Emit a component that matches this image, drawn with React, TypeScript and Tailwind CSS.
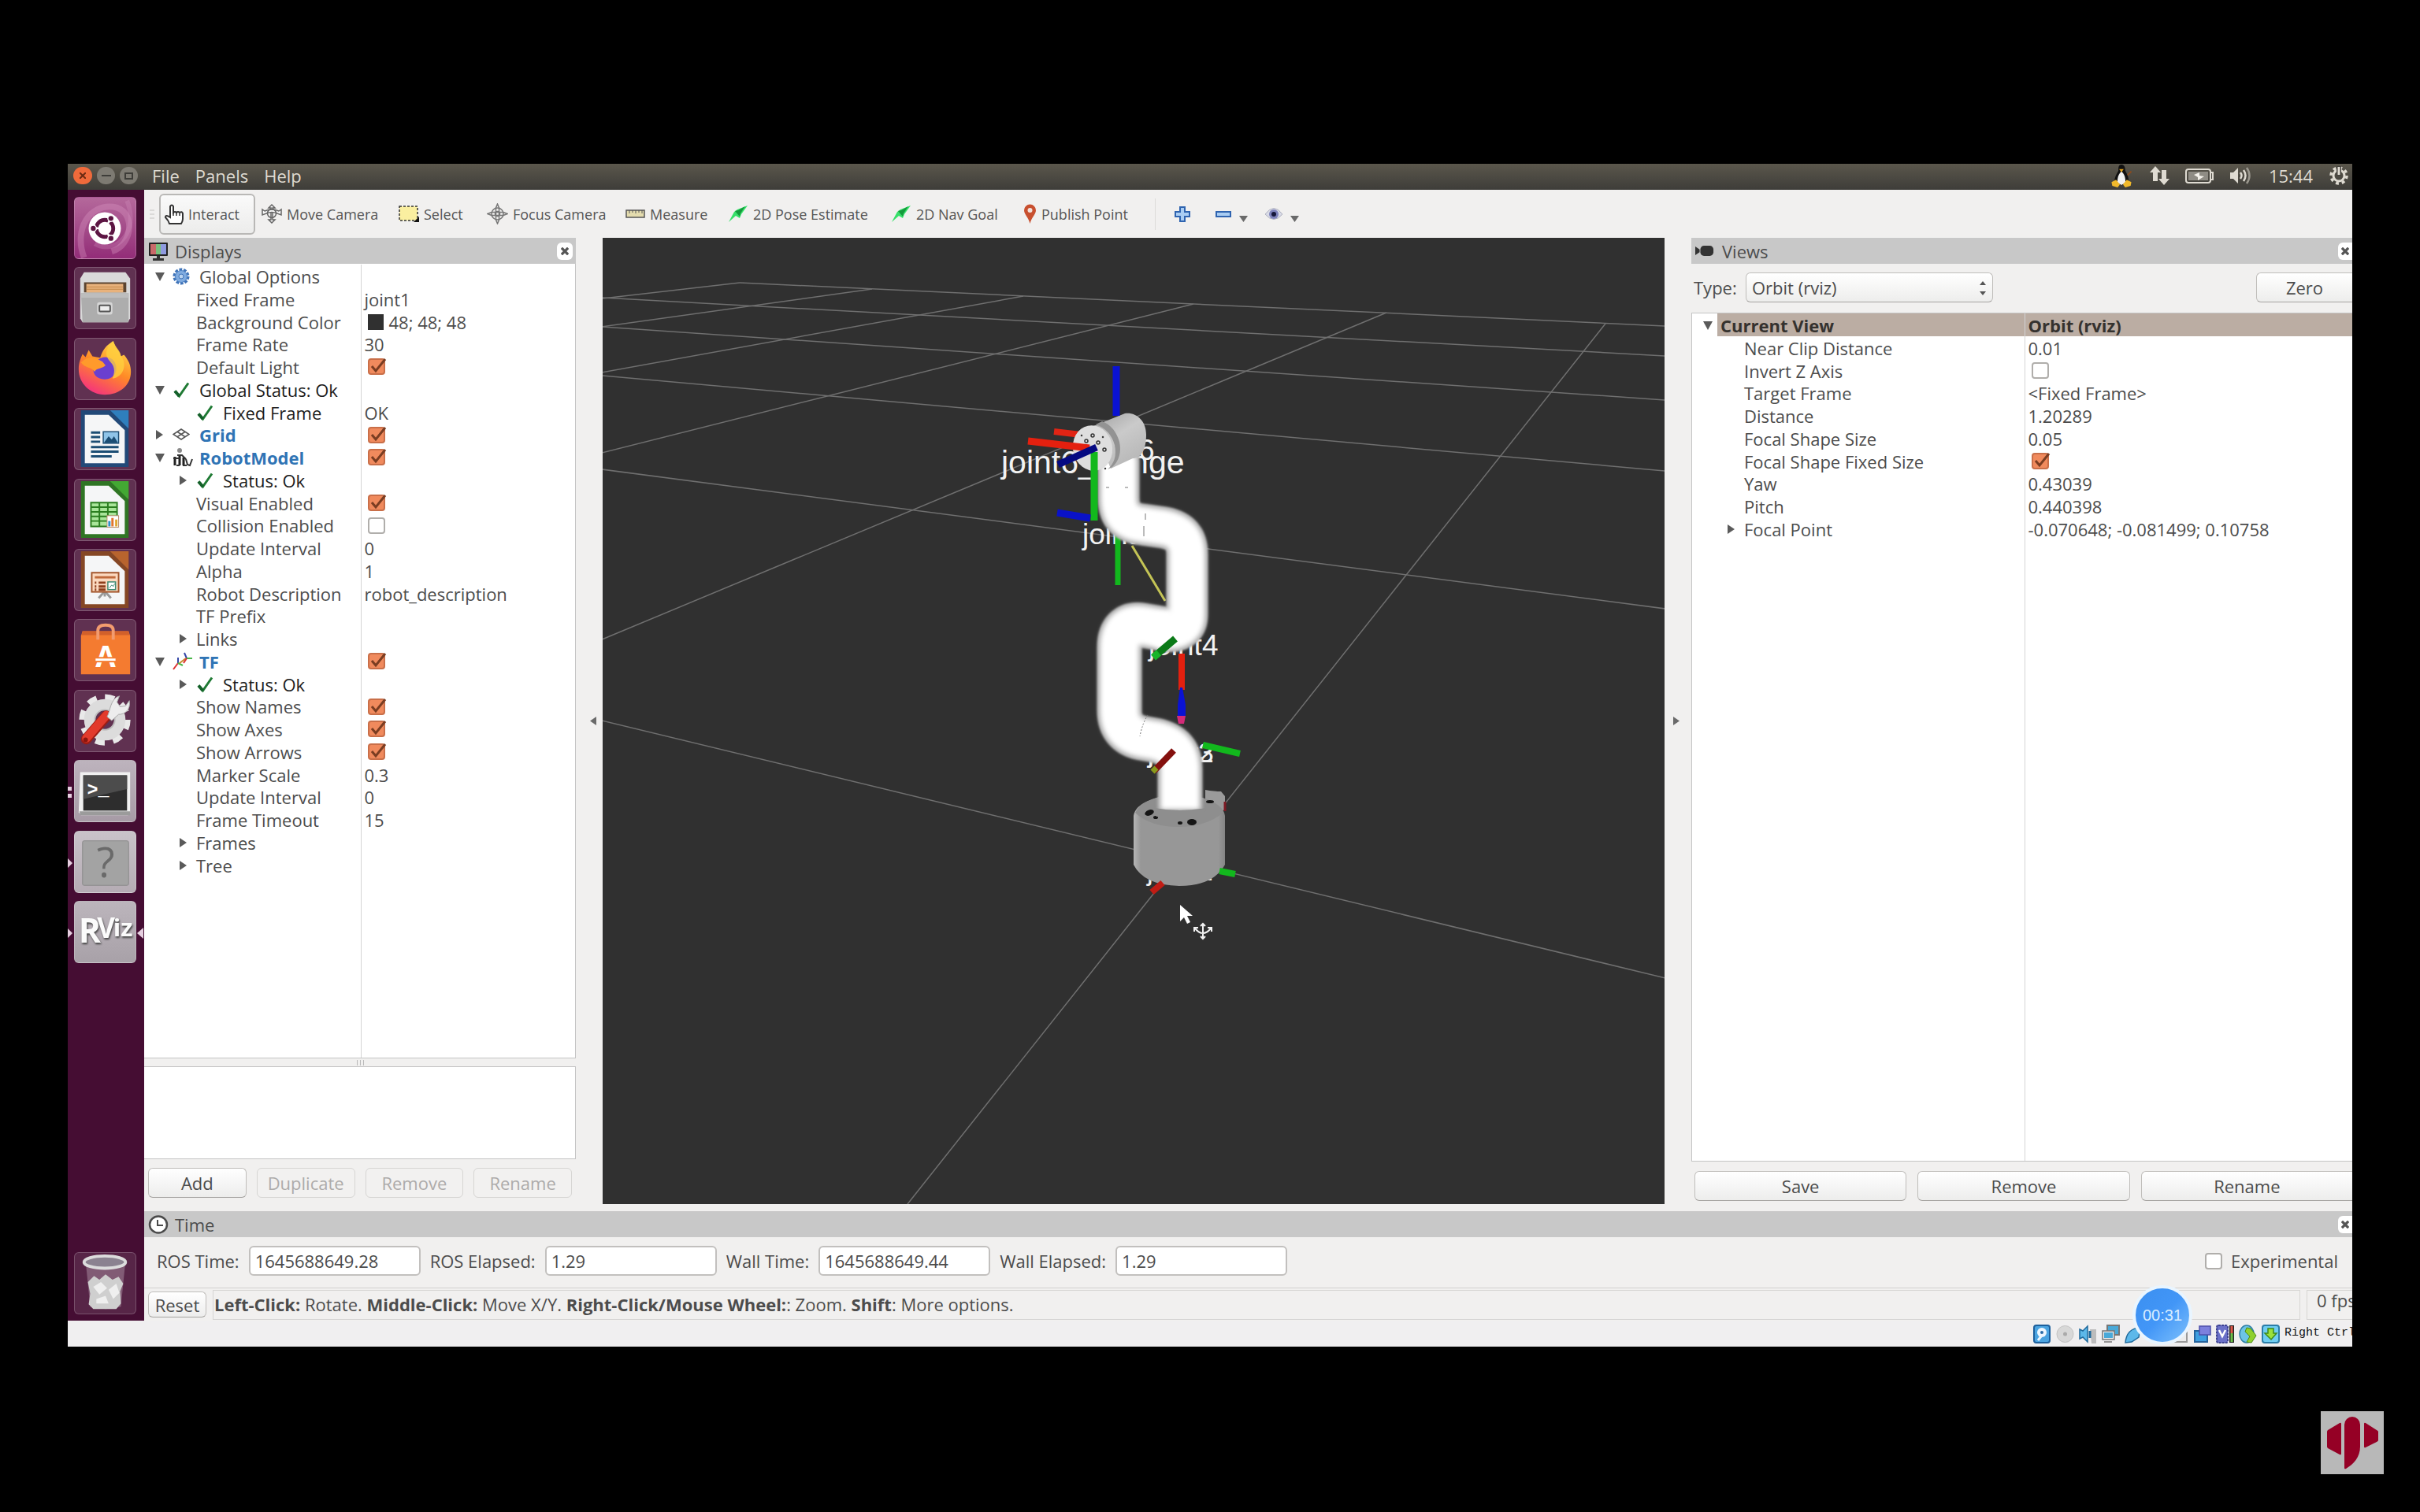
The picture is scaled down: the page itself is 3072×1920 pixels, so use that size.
import React from 'react';
import clsx from 'clsx';

interface TreeRow {
    label: string;
    depth: number;
    value?: React.ReactNode;
    checked?: boolean;
    open?: boolean;
    icon?: React.ReactNode;
    tone?: 'status' | 'display' | 'selected';
}

const CheckIcon = () => (
    <svg className="h-[22px] w-[22px]" viewBox="0 0 22 22" fill="none">
        <path d="M3 12.500 8.500 19 20 2.500" stroke="#1f7a34" strokeWidth="3" />
        <path d="M3 12.500 8.500 19" stroke="#14602a" strokeWidth="4" />
    </svg>
);

const GearIcon = () => (
    <svg className="h-[22px] w-[22px]" viewBox="0 0 22 22" fill="none">
        <circle cx="11" cy="11" r="8.500" stroke="#3f73b8" strokeWidth="4" strokeDasharray="3.600 1.740" />
        <circle cx="11" cy="11" r="7.500" fill="#7fabdf" stroke="#4f83c6" />
        <circle cx="11" cy="11" r="3" fill="#b9d3f0" stroke="#3f73b8" />
    </svg>
);

const GridIcon = () => (
    <svg className="h-[22px] w-[22px]" viewBox="0 0 22 22" fill="none" stroke="#555" strokeWidth="1.500">
        <path d="M11 4 21 10.500 11 17 1 10.500zM6 7.250 16 13.750M16 7.250 6 13.750" />
    </svg>
);

const RobotIcon = () => (
    <svg className="h-[24px] w-[26px]" viewBox="0 0 26 24" fill="none">
        <circle cx="9" cy="3" r="3" fill="#8a8a8a" />
        <path d="M3 11v11M9 9v13M14 12v10" stroke="#222" strokeWidth="3" />
        <path d="M6 9h6l5 5M1 13h8M5 22h4M13 22h5M17 14l2 7 3 1 3-8" stroke="#333" strokeWidth="2" />
    </svg>
);

const TfIcon = () => (
    <svg className="h-[24px] w-[26px]" viewBox="0 0 26 24" fill="none" strokeWidth="2">
        <path d="m1 22 6-8" stroke="#d33" />
        <path d="M7 14V7M18 8l-3-7" stroke="#3547a8" />
        <path d="m7 14 6 3M18 8h7" stroke="#49b649" />
        <path d="m9 14 8-6" stroke="#c98a2f" />
        <path d="m14 14 4-6" stroke="#d33" />
    </svg>
);

const displayRows: TreeRow[] = [
    { label: 'Global Options', depth: 0, open: true, icon: <GearIcon /> },
    { label: 'Fixed Frame', depth: 1, value: 'joint1' },
    {
        label: 'Background Color',
        depth: 1,
        value: (
            <span className="flex items-center gap-[7px] pl-1">
                <span className="h-5 w-5 bg-[#303030]" />
                48; 48; 48
            </span>
        ),
    },
    { label: 'Frame Rate', depth: 1, value: '30' },
    { label: 'Default Light', depth: 1, checked: true },
    { label: 'Global Status: Ok', depth: 0, open: true, icon: <CheckIcon />, tone: 'status' },
    { label: 'Fixed Frame', depth: 1, icon: <CheckIcon />, value: 'OK', tone: 'status' },
    { label: 'Grid', depth: 0, open: false, icon: <GridIcon />, checked: true, tone: 'display' },
    { label: 'RobotModel', depth: 0, open: true, icon: <RobotIcon />, checked: true, tone: 'display' },
    { label: 'Status: Ok', depth: 1, open: false, icon: <CheckIcon />, tone: 'status' },
    { label: 'Visual Enabled', depth: 1, checked: true },
    { label: 'Collision Enabled', depth: 1, checked: false },
    { label: 'Update Interval', depth: 1, value: '0' },
    { label: 'Alpha', depth: 1, value: '1' },
    { label: 'Robot Description', depth: 1, value: 'robot_description' },
    { label: 'TF Prefix', depth: 1 },
    { label: 'Links', depth: 1, open: false },
    { label: 'TF', depth: 0, open: true, icon: <TfIcon />, checked: true, tone: 'display' },
    { label: 'Status: Ok', depth: 1, open: false, icon: <CheckIcon />, tone: 'status' },
    { label: 'Show Names', depth: 1, checked: true },
    { label: 'Show Axes', depth: 1, checked: true },
    { label: 'Show Arrows', depth: 1, checked: true },
    { label: 'Marker Scale', depth: 1, value: '0.3' },
    { label: 'Update Interval', depth: 1, value: '0' },
    { label: 'Frame Timeout', depth: 1, value: '15' },
    { label: 'Frames', depth: 1, open: false },
    { label: 'Tree', depth: 1, open: false },
];

const viewRows: TreeRow[] = [
    { label: 'Current View', depth: 0, open: true, value: 'Orbit (rviz)', tone: 'selected' },
    { label: 'Near Clip Distance', depth: 1, value: '0.01' },
    { label: 'Invert Z Axis', depth: 1, checked: false },
    { label: 'Target Frame', depth: 1, value: '<Fixed Frame>' },
    { label: 'Distance', depth: 1, value: '1.20289' },
    { label: 'Focal Shape Size', depth: 1, value: '0.05' },
    { label: 'Focal Shape Fixed Size', depth: 1, checked: true },
    { label: 'Yaw', depth: 1, value: '0.43039' },
    { label: 'Pitch', depth: 1, value: '0.440398' },
    { label: 'Focal Point', depth: 1, open: false, value: '-0.070648; -0.081499; 0.10758' },
];

const Checkbox: React.FC<{ label?: string; checked?: boolean }> = ({ label, checked = false }) => (
    <span className="relative block h-[21px] w-6">
        <input
            type="checkbox"
            aria-label={label}
            defaultChecked={checked}
            className="peer block h-[21px] w-[22px] appearance-none rounded-[4px] border-2 border-[#b0aeab] bg-white checked:border-[#c96f49] checked:bg-[#f08a5d]"
        />
        <svg className="pointer-events-none absolute inset-0 hidden h-[21px] w-6 peer-checked:block" viewBox="0 0 24 21" fill="none">
            <path d="m5 10 5 6L22 1" stroke="#7a3d22" strokeWidth="3" />
        </svg>
    </span>
);

const PropertyTree: React.FC<{ rows: TreeRow[]; name: string; nameColumn: string }> = ({ rows, name, nameColumn }) => (
    <table aria-label={name} className="w-full table-fixed border-collapse text-left leading-7">
        <colgroup>
            <col className={nameColumn} />
            <col />
        </colgroup>
        <tbody>
            {rows.map((row, i) => (
                <tr
                    key={i}
                    className={clsx(
                        'h-[29px] nth-[4n]:h-7',
                        row.tone === 'status' && 'text-[#1c1c1c]',
                        row.tone === 'selected' && 'bg-[#bbada3] font-bold text-[#35322f]',
                    )}
                >
                    <td
                        className={clsx(
                            'border-r border-[#d4d4d4] p-0',
                            row.tone === 'selected' && 'bg-[linear-gradient(to_right,#ffffff_32px,#bbada3_32px)]',
                        )}
                    >
                        <div className={clsx('flex h-7 items-center whitespace-nowrap', row.depth ? 'pl-[41px]' : 'pl-[11px]')}>
                            <span className="flex w-[25px] shrink-0">
                                {row.open !== undefined && (
                                    <button type="button" aria-label={`Toggle ${row.label}`} className="pl-[3px]">
                                        <svg className="h-3 w-3" viewBox="0 0 12 12" fill="#5a5a5a">
                                            <path d={row.open ? 'M0 1h12L6 12z' : 'M1 0v12l9-6z'} />
                                        </svg>
                                    </button>
                                )}
                            </span>
                            {row.icon && <span className="flex w-[34px] shrink-0">{row.icon}</span>}
                            <span className={clsx(row.tone === 'display' && 'font-bold text-[#2f74b5]')}>{row.label}</span>
                        </div>
                    </td>
                    <td className="p-0 pl-1">
                        <div className={clsx('whitespace-nowrap', row.tone === 'status' && 'text-[#4c4c4c]')}>
                            {row.checked === undefined ? (
                                row.value
                            ) : (
                                <span className="flex pl-1">
                                    <Checkbox label={row.label} checked={row.checked} />
                                </span>
                            )}
                        </div>
                    </td>
                </tr>
            ))}
            <tr>
                <td className="border-r border-[#d4d4d4] p-0" />
                <td className="p-0" />
            </tr>
        </tbody>
    </table>
);

const CloseButton: React.FC<{ label: string; clipped?: boolean }> = ({ label, clipped }) => (
    <button
        type="button"
        aria-label={label}
        className={clsx(
            'ml-auto flex h-[22px] items-center justify-center bg-white',
            clipped ? 'w-[18px] rounded-l-md' : 'mr-1 w-5 rounded-md',
        )}
    >
        <svg className="h-[10px] w-[10px]" viewBox="0 0 12 12" stroke="#555" strokeWidth="4">
            <path d="m1 1 10 10M11 1 1 11" />
        </svg>
    </button>
);

const PushButton: React.FC<{ children: React.ReactNode; className?: string; disabled?: boolean }> = ({
    children,
    className,
    disabled,
}) => (
    <button
        type="button"
        disabled={disabled}
        className={clsx(
            'flex items-center justify-center rounded-md border leading-7',
            disabled
                ? 'border-[#d6d5d3] bg-[#f2f1f0] text-[#adabaa]'
                : 'border-[#bfbdba] border-b-[#a5a3a0] bg-linear-to-b from-white to-[#ededec]',
            className,
        )}
    >
        {children}
    </button>
);

/* ---------- top panel ---------- */

const MenuBar = () => (
    <header className="flex h-[33px] items-center bg-linear-to-b from-[#5b574c] to-[#3e3d39] pb-[3px] pl-[7px] pr-1 leading-7 text-[#dfdbd2]">
        <div className="flex items-center gap-[6px]">
            <button type="button" aria-label="Close" className="flex h-[22px] w-6 items-center justify-center rounded-full bg-[#ef6a3b]">
                <svg className="h-2 w-2" viewBox="0 0 8 8" stroke="#6b2a12" strokeWidth="2"><path d="m0 0 8 8M8 0 0 8" /></svg>
            </button>
            <button type="button" aria-label="Minimize" className="flex h-[22px] w-[23px] items-center justify-center rounded-full bg-[#7d7a72]">
                <span className="h-[2px] w-3 bg-[#3e3d39]" />
            </button>
            <button type="button" aria-label="Maximize" className="flex h-[22px] w-[23px] items-center justify-center rounded-full bg-[#7d7a72]">
                <span className="h-[9px] w-[11px] border-2 border-[#3e3d39]" />
            </button>
        </div>
        <nav className="ml-[18px] flex gap-5">
            <button type="button">File</button>
            <button type="button">Panels</button>
            <button type="button">Help</button>
        </nav>
        <div className="ml-auto flex items-center gap-5">
            <svg className="h-[30px] w-[30px]" viewBox="0 0 30 31">
                <path d="M15 1c4 0 5 4 5 8 2 4 5 8 4 14l-4 5H10l-4-5c0-6 3-10 5-14 0-4 0-8 4-8z" fill="#111" />
                <path d="M15 10c3 2 6 8 5 15l-5 3-5-3c-1-7 2-13 5-15z" fill="#f2f2f2" />
                <path d="M12 7h6l-3 4z" fill="#e7a51c" />
                <path d="M2 24l6-3 5 6-3 4-7-2zM28 24l-6-3-5 6 3 4 7-2z" fill="#f1b92b" />
                <path d="m23 15 5-5" stroke="#8a4b1f" strokeWidth="2" />
            </svg>
            <svg className="h-6 w-[26px]" viewBox="0 0 26 24" fill="#dfdbd2">
                <path d="M8 0 1 8h4v11h6V8h4zM19 24l7-8h-4V5h-6v11h-4z" />
            </svg>
            <svg className="h-[19px] w-[36px]" viewBox="0 0 36 19" fill="none">
                <rect x="1" y="1" width="31" height="17" rx="3" stroke="#dfdbd2" strokeWidth="2" />
                <rect x="4" y="4" width="25" height="11" fill="#8f8c84" />
                <path d="M33 5h2v9h-2" stroke="#dfdbd2" strokeWidth="2" />
                <path d="m11 8 7-3v4l6 1-8 5v-4z" fill="#f4f1ea" />
            </svg>
            <svg className="h-[22px] w-[30px]" viewBox="0 0 30 22" fill="none" stroke="#dfdbd2" strokeWidth="2.500">
                <path d="M1 7h4l6-6v20l-6-6H1z" fill="#dfdbd2" stroke="none" />
                <path d="M14 7q3 4 0 8M18 4q5 7 0 14" />
                <path d="M22 1q7 10 0 20" stroke="#9a978e" />
            </svg>
            <time>15:44</time>
            <svg className="h-6 w-[26px]" viewBox="0 0 26 24" fill="none">
                <circle cx="13" cy="12" r="10" stroke="#dfdbd2" strokeWidth="3.500" strokeDasharray="3.900 3.950" />
                <circle cx="13" cy="12" r="7" stroke="#dfdbd2" strokeWidth="3" />
                <path d="M13 0v12" stroke="#45433d" strokeWidth="6" />
                <path d="M13 1v10" stroke="#dfdbd2" strokeWidth="3" />
            </svg>
        </div>
    </header>
);

/* ---------- launcher ---------- */

const OfficePage: React.FC<{ frame: string; fold: string; children: React.ReactNode }> = ({ frame, fold, children }) => (
    <>
        <path d="M8 2h62v74H8z" fill={frame} opacity="0.900" />
        <path d="M46 2h24v24z" fill={fold} />
        <path d="M13 8h31l21 20v43H13z" fill="#f5f6f7" />
        {children}
    </>
);

const DashIcon = () => (
    <>
        <path d="M12 78C-2 40 20 8 50 12s26 50-2 58" fill="none" stroke="#dd9cc6" strokeWidth="8" opacity="0.350" />
        <path d="M68 4C84 44 54 76 26 60" fill="none" stroke="#dd9cc6" strokeWidth="6" opacity="0.250" />
        <circle cx="39" cy="40" r="21" fill="#fff" />
        <circle cx="39" cy="40" r="11" fill="none" stroke="#5c1543" strokeWidth="5" strokeDasharray="20 3.040" strokeDashoffset="10" />
        <g fill="#5c1543" stroke="#fff" strokeWidth="1.500">
            <circle cx="24" cy="40" r="4" />
            <circle cx="47" cy="27" r="4" />
            <circle cx="47" cy="53" r="4" />
        </g>
    </>
);

const FilesIcon = () => (
    <>
        <path d="M12 6h54l6 8v52l-3 5H10l-3-5V14z" fill="#d9d9d9" />
        <path d="M12 19h55v13H12z" fill="#5c4430" />
        <path d="M15 21h48v11H15z" fill="#e8b27c" />
        <path d="M15 25h48M15 28h48" stroke="#c08648" />
        <path d="M8 33h62v38H10z" fill="#adadad" />
        <path d="M8 33h62v6H8z" fill="#bdbdbd" />
        <rect x="29" y="45" width="20" height="16" rx="3" fill="#d6d6d6" />
        <rect x="32" y="49" width="14" height="8" rx="1" fill="#eee" stroke="#555" strokeWidth="2" />
    </>
);

const FirefoxIcon = () => (
    <>
        <defs>
            <linearGradient id="fox" x1="0.800" y1="0" x2="0.300" y2="1">
                <stop offset="0" stopColor="#ffe14d" />
                <stop offset="0.500" stopColor="#ff8a26" />
                <stop offset="1" stopColor="#f5317f" />
            </linearGradient>
        </defs>
        <path d="M5 40c0-9 3-15 5-20l4 4 4-9 5 8 10 2C36 14 42 8 50 3c3 10 8 12 10 20l4-2c6 7 9 14 9 22 0 18-15 30-34 30S5 58 5 40z" fill="url(#fox)" />
        <path d="M25 37c2-11 13-17 24-10l3 4c6 12-2 22-13 22s-17-8-14-16z" fill="#6a3fd0" />
        <path d="M8 31c10-10 20-6 28-1l4 5c-5 5-12 3-14 8-6-7-12-4-18-12z" fill="#ff9a2b" />
        <path d="M50 3c-10 10-12 18-4 27 8 8 5 16 3 22 14-2 20-18 11-30C59 15 53 12 50 3z" fill="#ffcf3f" opacity="0.800" />
    </>
);

const WriterIcon = () => (
    <OfficePage frame="#1c4c7c" fold="#2f7fbd">
        <path d="M21 31h12M21 37h12M21 43h12M21 50h36M21 56h36M21 62h27" stroke="#1b4d73" strokeWidth="3" />
        <rect x="37" y="30" width="20" height="15" fill="#8fc4e8" stroke="#1b4d73" strokeWidth="1.500" />
        <path d="m38 44 6-8 4 4 3-4 5 8z" fill="#1b4d73" />
    </OfficePage>
);

const CalcIcon = () => (
    <OfficePage frame="#2a7d1f" fold="#43a833">
        <rect x="21" y="30" width="34" height="31" fill="#a9e59a" />
        <path d="M21 30h34v31H21zM21 36h34M21 42h34M21 48h34M21 54h34M32 30v31M43 30v31" fill="none" stroke="#2a7d1f" strokeWidth="2" />
        <rect x="42" y="47" width="15" height="15" fill="#fff" stroke="#b98d6c" />
        <path d="M45 61v-7" stroke="#2f8fc8" strokeWidth="3" />
        <path d="M49 61V50" stroke="#e0752f" strokeWidth="3" />
        <path d="M54 61v-9" stroke="#e0a52f" strokeWidth="3" />
    </OfficePage>
);

const ImpressIcon = () => (
    <OfficePage frame="#8a4a20" fold="#b8642e">
        <path d="m39 54-8 9M39 54l8 9M39 54v7" stroke="#999" strokeWidth="3" />
        <rect x="22" y="30" width="35" height="25" fill="#fbd9bf" stroke="#a2542a" strokeWidth="2" />
        <path d="M26 36h27" stroke="#c06a3b" strokeWidth="3" />
        <path d="M26 43h2M26 48h2M26 52h2M31 43h9M31 48h9M31 52h9" stroke="#8f3f1d" strokeWidth="3" />
        <rect x="43" y="42" width="10" height="10" fill="#fff" stroke="#3d8a72" strokeWidth="1.500" />
        <path d="m45 50 3-4 2 2 2-4" fill="none" stroke="#3d8a72" />
    </OfficePage>
);

const SoftwareIcon = () => (
    <>
        <path d="M10 15h60l2 6v50H8V21z" fill="#f47b30" />
        <path d="M10 15h60l1 5H9z" fill="#d2602a" />
        <path d="M30 26V14q0-7 10-7t10 7v12" fill="none" stroke="#f29b6e" strokeWidth="4" />
        <text x="40" y="62" textAnchor="middle" fontFamily="Open Sans, sans-serif" fontWeight="700" fontSize="38" fill="#fff">A</text>
        <path d="M27 52h26" stroke="#f47b30" strokeWidth="7" />
        <path d="M27 52h26" stroke="#fff" strokeWidth="3" />
    </>
);

const SettingsIcon = () => (
    <>
        <circle cx="39" cy="38" r="29" fill="none" stroke="#e9e9e9" strokeWidth="9" strokeDasharray="12 10.780" />
        <circle cx="39" cy="38" r="20" fill="none" stroke="#dcdcdc" strokeWidth="14" />
        <circle cx="39" cy="38" r="13" fill="none" stroke="#bdbdbd" strokeWidth="2" />
        <path d="m15 63 26-30" stroke="#9c1d15" strokeWidth="14" strokeLinecap="round" />
        <path d="m15 62 26-30" stroke="#e23a2c" strokeWidth="11" strokeLinecap="round" />
        <circle cx="14" cy="64" r="3" fill="#8a150f" />
        <path d="M42 34C46 28 46 10 58 7l-3 8 4 6 7-1 5-7c2 12-6 18-14 18l-9 8z" fill="#ededed" stroke="#a8a8a8" />
    </>
);

const TerminalIcon = () => (
    <>
        <path d="M7 15h65v52l-3 4H8l-3-4z" fill="#f0f0f0" />
        <path d="M6 66h66v5H7z" fill="#9b9b9b" />
        <rect x="11" y="19" width="57" height="46" fill="#2d2d2d" />
        <path d="M11 19h57v18L11 50z" fill="#4c4c4c" />
        <text x="16" y="45" fontFamily="Liberation Mono, monospace" fontWeight="700" fontSize="24" fill="#fff">&gt;_</text>
    </>
);

const UnknownIcon = () => (
    <>
        <rect x="10" y="12" width="60" height="58" rx="2" fill="#a3a3a3" stroke="#8a8a8a" />
        <text x="40" y="59" textAnchor="middle" fontFamily="Open Sans, sans-serif" fontSize="54" fill="#6a6a6a">?</text>
    </>
);

const RvizIcon = () => (
    <text className="drop-shadow-[1px_2px_1px_#444444]" fontFamily="Open Sans, sans-serif" fontWeight="700" fill="#fbfbfb">
        <tspan x="5" y="53" fontSize="44">R</tspan>
        <tspan x="29" y="47" fontSize="36">V</tspan>
        <tspan x="50" y="45" fontSize="32">iz</tspan>
    </text>
);

const TrashIcon = () => (
    <>
        <path d="M14 10h52l-6 60q-20 6-40 0z" fill="#fff" opacity="0.250" />
        <path d="m17 38 8-8 7 5 8-7 9 7 8-4 6 9-4 10 1 16-6 7H24l-6-6 2-14z" fill="#cfcfcf" />
        <path d="m24 44 10-6 8 8-10 8zM44 48l10-8 4 12-8 8zM28 60l12-4 4 10H28z" fill="#efefef" />
        <ellipse cx="39" cy="12" rx="27" ry="8" fill="#8b8290" stroke="#dcdcdc" strokeWidth="4" />
    </>
);

const launcherItems = [
    { name: 'Search your computer', icon: <DashIcon />, tile: 'bg-linear-to-b from-[#b4689b] to-[#932c78]' },
    { name: 'Files', icon: <FilesIcon />, tile: 'bg-white/15' },
    { name: 'Firefox Web Browser', icon: <FirefoxIcon />, tile: 'bg-white/15' },
    { name: 'LibreOffice Writer', icon: <WriterIcon />, tile: 'bg-white/15' },
    { name: 'LibreOffice Calc', icon: <CalcIcon />, tile: 'bg-white/15' },
    { name: 'LibreOffice Impress', icon: <ImpressIcon />, tile: 'bg-white/15' },
    { name: 'Ubuntu Software', icon: <SoftwareIcon />, tile: 'bg-white/15' },
    { name: 'System Settings', icon: <SettingsIcon />, tile: 'bg-white/15' },
    { name: 'Terminal', icon: <TerminalIcon />, tile: 'bg-linear-to-b from-[#bdb3bd] to-[#a79ba6]', pips: 'double' },
    { name: 'Unknown application', icon: <UnknownIcon />, tile: 'bg-linear-to-b from-[#c9c2c9] to-[#b5acb4]', pips: 'single' },
    { name: 'RViz', icon: <RvizIcon />, tile: 'bg-linear-to-b from-[#bcb5bc] to-[#a8a1a8]', pips: 'active' },
];

const LauncherTile: React.FC<{ name: string; tile: string; pips?: string; children: React.ReactNode }> = ({
    name,
    tile,
    pips,
    children,
}) => (
    <button type="button" aria-label={name} className={clsx('relative block h-[79px] w-[79px] rounded-md border border-white/20', tile)}>
        <svg className="h-full w-full" viewBox="0 0 79 79">{children}</svg>
        {pips && (
            <svg className="absolute -left-[9px] top-8 h-4 w-[6px]" viewBox="0 0 6 16" fill="#e6cfe0">
                <path d={pips === 'double' ? 'M0 1h5v5H0zM0 10h5v5H0z' : 'M0 2l6 6-6 6z'} />
            </svg>
        )}
        {pips === 'active' && (
            <svg className="absolute -right-[10px] top-8 h-4 w-2" viewBox="0 0 8 16" fill="#e6cfe0">
                <path d="M8 1v14L0 8z" />
            </svg>
        )}
    </button>
);

const Launcher = () => (
    <aside className="flex w-[97px] shrink-0 flex-col bg-[#450d33] px-2 pb-2 pt-[9px]">
        <div className="flex h-[973px] flex-col justify-between">
            {launcherItems.map((item) => (
                <LauncherTile key={item.name} name={item.name} tile={item.tile} pips={item.pips}>
                    {item.icon}
                </LauncherTile>
            ))}
        </div>
        <div className="mt-auto">
            <LauncherTile name="Trash" tile="bg-white/10">
                <TrashIcon />
            </LauncherTile>
        </div>
    </aside>
);

/* ---------- toolbar ---------- */

const HandIcon = () => (
    <svg className="h-[26px] w-[27px]" viewBox="0 0 27 26" fill="#fff" stroke="#333" strokeWidth="2">
        <path d="M8 15V3q2-3 4 0v8q2-2 4 0 2-2 4 0 3-2 4 1v7q0 3-2 6H7q-1-4-5-8 0-4 6 0z" />
        <path d="M12 11v4M16 11v4M20 12v3" strokeWidth="1.500" />
    </svg>
);

const MoveIcon = () => (
    <svg className="h-[25px] w-[26px]" viewBox="0 0 26 25" fill="#fafafa" stroke="#666" strokeWidth="1.500">
        <path d="m13 1 4 4h-3v15h3l-4 4-4-4h3V5H9z" />
        <path d="M1 12V7l3 2q9-4 18 0l3-2v7l-5-2q-7-3-14 0l-5 2z" />
        <circle cx="13" cy="12" r="5.500" fill="none" />
    </svg>
);

const SelectIcon = () => (
    <svg className="h-[21px] w-[26px]" viewBox="0 0 26 21">
        <rect x="1" y="1" width="23" height="18" fill="#faefa0" stroke="#333" strokeWidth="1.500" strokeDasharray="3 2" />
        <path d="M26 14v7h-7z" fill="#111" />
    </svg>
);

const FocusIcon = () => (
    <svg className="h-[27px] w-[27px]" viewBox="0 0 27 27" fill="none" stroke="#777" strokeWidth="1.500">
        <circle cx="13.500" cy="13.500" r="7.500" />
        <circle cx="13.500" cy="13.500" r="3" />
        <path d="M13.500 1l2 5v15l-2 5-2-5V6zM1 13.500l5-2h15l5 2-5 2H6z" />
    </svg>
);

const MeasureIcon = () => (
    <svg className="h-[11px] w-[25px]" viewBox="0 0 25 11">
        <rect x="1" y="1" width="23" height="9" fill="#e4dcae" stroke="#555" strokeWidth="1.500" />
        <path d="M5 1v4M9 1v3M13 1v4M17 1v3M21 1v4" stroke="#555" />
    </svg>
);

const PoseIcon = () => (
    <svg className="h-[23px] w-[26px]" viewBox="0 0 26 23">
        <path d="M1 22 8 9l4-3L25 1 17 12l-2 5-5-3z" fill="#37e06a" />
        <path d="m9 8 6 7 1-4 6-9-9 5z" fill="#149a3c" />
    </svg>
);

const PinIcon = () => (
    <svg className="h-[25px] w-[17px]" viewBox="0 0 17 25">
        <path d="M8.500 25C7 18 1 13 1 8a7.500 7.500 0 0 1 15 0c0 5-6 10-7.500 17z" fill="#c8502f" />
        <circle cx="8.500" cy="8" r="3" fill="#f3e2dc" />
    </svg>
);

const tools = [
    { name: 'Move Camera', icon: <MoveIcon />, width: 'w-[174px]' },
    { name: 'Select', icon: <SelectIcon />, width: 'w-[112px]' },
    { name: 'Focus Camera', icon: <FocusIcon />, width: 'w-[176px]' },
    { name: 'Measure', icon: <MeasureIcon />, width: 'w-[130px]' },
    { name: '2D Pose Estimate', icon: <PoseIcon />, width: 'w-[207px]' },
    { name: '2D Nav Goal', icon: <PoseIcon />, width: 'w-[168px]' },
    { name: 'Publish Point', icon: <PinIcon />, width: 'w-[167px]' },
];

const DropArrow = () => (
    <svg className="mt-3 h-2 w-[11px]" viewBox="0 0 11 8" fill="#6a6a6a"><path d="M0 0h11L5.500 8z" /></svg>
);

const Toolbar = () => (
    <div role="toolbar" className="flex h-[61px] items-center overflow-hidden pl-[7px] text-[18px] leading-6 text-[#555]">
        <svg className="mr-[6px] h-3 w-[6px] shrink-0" viewBox="0 0 6 12" stroke="#c5c4c2"><path d="M0 1h6M0 6h6M0 11h6" /></svg>
        <button type="button" className="flex h-[52px] w-[122px] shrink-0 items-center gap-1 rounded-md border-2 border-[#b9b8b6] bg-linear-to-b from-[#fafafa] to-[#ececeb] pl-1">
            <HandIcon />
            Interact
        </button>
        <div className="flex shrink-0 pl-2">
            {tools.map((tool) => (
                <button key={tool.name} type="button" className={clsx('flex items-center gap-[6px] whitespace-nowrap', tool.width)}>
                    {tool.icon}
                    {tool.name}
                </button>
            ))}
        </div>
        <span className="h-10 w-px shrink-0 bg-[#dcdbd9]" />
        <button type="button" aria-label="Add tool" className="ml-6">
            <svg className="h-5 w-5" viewBox="0 0 20 20"><path d="M7 1h6v6h6v6h-6v6H7v-6H1V7h6z" fill="#a9cdf3" stroke="#2f64b0" strokeWidth="2" /></svg>
        </button>
        <button type="button" aria-label="Remove tool" className="ml-8 flex items-center gap-[10px]">
            <svg className="h-2 w-5" viewBox="0 0 20 8"><rect x="1" y="1" width="18" height="6" fill="#a9cdf3" stroke="#2f64b0" strokeWidth="2" /></svg>
            <DropArrow />
        </button>
        <button type="button" aria-label="Tool visibility" className="ml-[22px] flex items-center gap-[10px]">
            <svg className="h-[18px] w-[22px]" viewBox="0 0 22 18">
                <path d="M0 9Q11-6 22 9 11 22 0 9z" fill="#d9dbe6" stroke="#aeb0bf" />
                <circle cx="11" cy="9" r="6" fill="#7d82bb" />
                <circle cx="11" cy="9" r="3" fill="#15173a" />
            </svg>
            <DropArrow />
        </button>
    </div>
);

/* ---------- docks ---------- */

const DockHeader: React.FC<{ title: string; icon: React.ReactNode; clipped?: boolean }> = ({ title, icon, clipped }) => (
    <div className="flex h-[33px] shrink-0 items-center bg-[#c8c8c8] pl-[5px] leading-7">
        <span className="flex w-[34px] items-center">{icon}</span>
        <h2>{title}</h2>
        <CloseButton label={`Close ${title}`} clipped={clipped} />
    </div>
);

const DisplaysPanel = () => (
    <section className="flex w-[548px] shrink-0 flex-col">
        <DockHeader
            title="Displays"
            icon={
                <svg className="h-6 w-[26px]" viewBox="0 0 26 24">
                    <rect x="1" y="1" width="24" height="17" rx="1" fill="#222" />
                    <path d="M3 3h7v13H3z" fill="#c96a6a" />
                    <path d="M10 3h6v13h-6z" fill="#79c07c" />
                    <path d="M16 3h7v13h-7z" fill="#8f9be0" />
                    <path d="M11 18h4v3h5v3H6v-3h5z" fill="#333" />
                </svg>
            }
        />
        <div className="flex flex-1 border border-l-0 border-t-0 border-[#c4c4c4] bg-white pt-px">
            <PropertyTree rows={displayRows} name="Displays" nameColumn="w-[275px]" />
        </div>
        <div className="flex h-[10px] items-center justify-center gap-[3px]">
            <span className="h-[7px] w-px bg-[#b9b9b9]" />
            <span className="h-[7px] w-px bg-[#b9b9b9]" />
            <span className="h-[7px] w-px bg-[#b9b9b9]" />
        </div>
        <div className="h-[118px] border border-l-0 border-[#c4c4c4] bg-white" />
        <div className="flex gap-[13px] px-[5px] pb-2 pt-[11px]">
            <PushButton className="h-[38px] flex-1">Add</PushButton>
            <PushButton className="h-[38px] flex-1" disabled>Duplicate</PushButton>
            <PushButton className="h-[38px] flex-1" disabled>Remove</PushButton>
            <PushButton className="h-[38px] flex-1" disabled>Rename</PushButton>
        </div>
    </section>
);

const ViewsPanel = () => (
    <section className="flex w-[839px] shrink-0 flex-col overflow-hidden">
        <DockHeader
            title="Views"
            clipped
            icon={
                <svg className="h-[13px] w-[24px]" viewBox="0 0 26 14" fill="#333">
                    <path d="M0 1l6 4v4l-6 4z" />
                    <rect x="7" y="0" width="18" height="14" rx="5" />
                </svg>
            }
        />
        <div className="flex h-[62px] items-center pb-[2px] pl-[3px]">
            <label htmlFor="view-type" className="w-[66px]">Type:</label>
            <div className="relative">
                <select
                    id="view-type"
                    className="h-[38px] w-[314px] appearance-none rounded-md border border-[#bfbdba] border-b-[#a5a3a0] bg-linear-to-b from-white to-[#ededec] pl-[7px] leading-7"
                >
                    <option>Orbit (rviz)</option>
                </select>
                <svg className="pointer-events-none absolute right-2 top-[11px] h-[18px] w-[10px]" viewBox="0 0 10 18" fill="#555">
                    <path d="M1 5h8L5 0zM1 13h8l-4 5z" />
                </svg>
            </div>
            <PushButton className="ml-auto h-[38px] w-[122px] rounded-r-none border-r-0">Zero</PushButton>
        </div>
        <div className="flex flex-1 border border-r-0 border-[#c4c4c4] bg-white">
            <PropertyTree rows={viewRows} name="Views" nameColumn="w-[422px]" />
        </div>
        <div className="flex gap-[14px] pb-1 pl-1 pt-3">
            <PushButton className="h-[38px] flex-1">Save</PushButton>
            <PushButton className="h-[38px] flex-1">Remove</PushButton>
            <PushButton className="h-[38px] flex-1 rounded-r-none border-r-0">Rename</PushButton>
        </div>
    </section>
);

/* ---------- 3D view ---------- */

const upperArm = 'M1420 585V632C1420 656 1432 664 1450 666L1478 670C1498 674 1507 684 1507 704V780C1507 798 1494 803 1480 801';
const lowerArm = 'M1486 800L1450 794C1430 791 1421 803 1421 822V902C1421 922 1431 933 1449 937L1466 940C1488 945 1498 956 1498 976V1028';

const Viewport = () => (
    <svg className="block min-w-0 flex-1 bg-[#303030]" viewBox="765 302 1348 1227" preserveAspectRatio="xMidYMid slice">
        <defs>
            <filter id="soft" filterUnits="userSpaceOnUse" x="1340" y="540" width="240" height="520">
                <feGaussianBlur stdDeviation="3" />
            </filter>
            <filter id="edge" filterUnits="userSpaceOnUse" x="1340" y="540" width="240" height="520">
                <feGaussianBlur stdDeviation="1" />
            </filter>
            <linearGradient id="base" x1="0" x2="1">
                <stop offset="0" stopColor="#b5b5b5" />
                <stop offset="0.080" stopColor="#979797" />
                <stop offset="0.930" stopColor="#979797" />
                <stop offset="1" stopColor="#858585" />
            </linearGradient>
            <linearGradient id="head" x1="0.200" y1="0" x2="0.800" y2="1">
                <stop offset="0" stopColor="#a9a9a9" />
                <stop offset="0.400" stopColor="#cacaca" />
                <stop offset="1" stopColor="#b4b4b4" />
            </linearGradient>
        </defs>

        <g stroke="#6f6f6f" strokeWidth="1.500">
            <path d="M939 359 2114 414M764 378 2114 452M764 415 2114 508M764 477 2114 598M764 596 2114 773M764 915 2114 1242" />
            <path d="M939 359 764 379M1107 367 764 415M1299 376 764 473M1515 386 764 575M1760 397 764 812M2038 411 1152 1529" fill="none" />
        </g>

        <g fill="#f2f2f2" fontFamily="Liberation Sans, Arial, sans-serif">
            <text x="1271" y="601" fontSize="41">joint6_flange</text>
            <text x="1377" y="584" fontSize="37">joint6</text>
            <text x="1374" y="691" fontSize="37">joint5</text>
            <text x="1458" y="832" fontSize="37">joint4</text>
            <text x="1457" y="968" fontSize="35">joint3</text>
            <text x="1457" y="968" fontSize="35">joint2</text>
            <text x="1456" y="1118" fontSize="35">joint1</text>
        </g>

        <path d="m1437 693 42 70" stroke="#c4c455" strokeWidth="3" />
        <path d="M1419 680v63" stroke="#12b81d" strokeWidth="7" />
        <path d="m1338 548 34 4" stroke="#e02414" strokeWidth="8" />

        <g>
            <path d="M1530 1003q12 2 20 2l5 6V1028L1530 1040z" fill="#9a9a9a" />
            <path d="M1555 1018v12" stroke="#7d1a24" strokeWidth="3" />
            <path d="M1439 1036Q1442 1014 1497 1008 1552 1014 1555 1036V1098Q1540 1125 1497 1125 1452 1124 1439 1098z" fill="url(#base)" />
            <path d="M1441 1032Q1450 1012 1497 1008 1546 1012 1553 1032 1530 1050 1497 1050 1460 1050 1441 1032z" fill="#8e8e8e" />
            <g fill="#161616">
                <ellipse cx="1459" cy="1032" rx="6" ry="3.500" transform="rotate(-20 1459 1032)" />
                <ellipse cx="1467" cy="1038" rx="3" ry="2" />
                <ellipse cx="1498" cy="1045" rx="3" ry="2" />
                <ellipse cx="1513" cy="1044" rx="6" ry="4" />
                <ellipse cx="1536" cy="1018" rx="5" ry="2" />
            </g>
        </g>

        <g fill="none" strokeLinejoin="round">
            <path d={lowerArm} stroke="#a0a0a0" strokeWidth="57" filter="url(#edge)" />
            <path d={upperArm} stroke="#a0a0a0" strokeWidth="53" strokeLinecap="round" filter="url(#edge)" />
            <path d={lowerArm} stroke="#fff" strokeWidth="50" filter="url(#soft)" />
            <path d={upperArm} stroke="#fff" strokeWidth="46" strokeLinecap="round" filter="url(#soft)" />
        </g>
        <path d="M1465 1026Q1498 1032 1531 1026L1528 1037H1468z" fill="#8e8e8e" />
        <path d="M1404 619h4M1428 619h4M1452 668v13M1454 652v8" stroke="#777" />
        <path d="M1457 908q-7 11-10 27" fill="none" stroke="#777" strokeDasharray="2 2" />

        <path d="M1388 541 1428 525C1442 523 1455 534 1455 552 1455 572 1448 582 1438 582L1410 595z" fill="url(#head)" />
        <path d="M1391 539q18 6 24 26 4 20-9 31l6-3q13-12 9-32-6-20-22-26z" fill="#939393" />
        <ellipse cx="1387" cy="569" rx="25" ry="29" fill="#dedede" transform="rotate(-12 1387 569)" />
        <g fill="none" stroke="#333" strokeWidth="1.500">
            <circle cx="1379" cy="560" r="2" />
            <circle cx="1387" cy="553" r="2" />
            <circle cx="1394" cy="562" r="2" />
            <circle cx="1402" cy="571" r="2" />
            <circle cx="1373" cy="553" r="0.500" />
            <circle cx="1400" cy="555" r="0.500" />
            <circle cx="1403" cy="595" r="0.500" />
        </g>

        <g strokeWidth="9">
            <path d="M1417 465v63" stroke="#0a12d2" />
            <path d="m1305 560 78 9" stroke="#e4200f" />
            <path d="M1389 574v87" stroke="#12b81d" />
            <path d="m1343 590 49-22" stroke="#060a82" />
            <path d="m1342 651 42 7" stroke="#0a12c8" />
            <path d="m1465 834 27-23" stroke="#0b7a18" />
            <path d="m1464 835 7-6" stroke="#17b52a" />
            <path d="M1500 830v46" stroke="#e4200f" strokeWidth="8" />
            <path d="M1498 873h3l4 22v14h-10v-14z" fill="#0a12d2" />
            <path d="M1494 909h11l-2 10h-7z" fill="#d32a78" />
            <path d="m1527 946 47 11" stroke="#12b81d" strokeWidth="8" />
            <path d="m1465 979 25-26" stroke="#84100e" strokeWidth="8" />
            <path d="m1463 980 5-5" stroke="#8a9a1c" strokeWidth="7" />
            <path d="m1548 1106 20 4" stroke="#12b81d" strokeWidth="8" />
            <path d="m1462 1133 14-12" stroke="#c01c14" strokeWidth="8" />
        </g>

        <path d="M1498 1149v21l5-5 4 8 4-2-4-8h7z" fill="#fff" />
        <g fill="none" stroke="#f2f2f2" strokeWidth="2">
            <path d="M1527 1174v17M1517 1179q10 12 20 0" />
            <path d="m1524 1176 3-3 3 3M1524 1189l3 3 3-3M1516 1183v-5h5M1538 1183v-5h-5" />
        </g>
    </svg>
);

const CollapseHandle: React.FC<{ side: 'left' | 'right' }> = ({ side }) => (
    <button
        type="button"
        aria-label={`Collapse ${side} panel`}
        className={clsx('flex w-[34px] shrink-0 items-center', side === 'left' ? 'justify-end pr-2' : 'pl-[11px]')}
    >
        <svg className="h-[11px] w-2" viewBox="0 0 8 11" fill="#6a6a6a">
            <path d={side === 'left' ? 'M8 0v11L0 5.500z' : 'M0 0v11l8-5.500z'} />
        </svg>
    </button>
);

/* ---------- bottom ---------- */

const timeFields = [
    { id: 'ros-time', label: 'ROS Time:', value: '1645688649.28' },
    { id: 'ros-elapsed', label: 'ROS Elapsed:', value: '1.29' },
    { id: 'wall-time', label: 'Wall Time:', value: '1645688649.44' },
    { id: 'wall-elapsed', label: 'Wall Elapsed:', value: '1.29' },
];

const TimePanel = () => (
    <section>
        <DockHeader
            title="Time"
            clipped
            icon={
                <svg className="h-6 w-[26px]" viewBox="0 0 26 24" fill="none" stroke="#4a4a4a" strokeWidth="2.500">
                    <ellipse cx="13" cy="12" rx="11" ry="10.500" fill="#fff" />
                    <path d="M12 6v7h7" strokeWidth="2" />
                </svg>
            }
        />
        <div className="flex h-[64px] items-center gap-3 pb-1 pl-4 pr-[18px]">
            {timeFields.map((field) => (
                <React.Fragment key={field.id}>
                    <label htmlFor={field.id} className="whitespace-nowrap">{field.label}</label>
                    <input
                        id={field.id}
                        readOnly
                        value={field.value}
                        className="h-[38px] w-[218px] rounded-md border-2 border-[#c2c0be] bg-white px-[6px]"
                    />
                </React.Fragment>
            ))}
            <label className="ml-auto flex items-center gap-[9px]">
                <Checkbox />
                Experimental
            </label>
        </div>
    </section>
);

const StatusBar = () => (
    <footer className="flex h-[42px] items-center border-t border-[#d2d1cf] pl-[5px]">
        <PushButton className="h-[33px] w-[74px]">Reset</PushButton>
        <p className="ml-2 h-[38px] flex-1 border border-[#d6d5d3] pl-px leading-[34px]">
            <b>Left-Click:</b> Rotate. <b>Middle-Click:</b> Move X/Y. <b>Right-Click/Mouse Wheel:</b>: Zoom. <b>Shift</b>: More options.
        </p>
        <p className="ml-2 h-[38px] w-[58px] overflow-hidden whitespace-nowrap border border-r-0 border-[#d6d5d3] pl-3 leading-6">0 fps</p>
    </footer>
);

const MachineBar = () => (
    <div className="flex h-[33px] items-center justify-end gap-[6px] overflow-hidden bg-[#f0eff0] font-['Liberation_Mono',monospace] text-[15px] text-[#111]">
        <svg className="h-6 w-[23px]" viewBox="0 0 23 24">
            <rect x="1" y="1" width="20" height="22" rx="3" fill="#4aa3e0" stroke="#1c5f9c" strokeWidth="2" />
            <circle cx="11" cy="10" r="6" fill="#eef7ff" />
            <circle cx="11" cy="10" r="2" fill="#2b6ca8" />
            <path d="m6 20 4-5" stroke="#eef7ff" strokeWidth="3" />
        </svg>
        <svg className="h-6 w-[23px]" viewBox="0 0 23 24">
            <circle cx="11.500" cy="12" r="10.500" fill="#d8d8d8" stroke="#c3c3c3" />
            <circle cx="11.500" cy="12" r="2.500" fill="#aaa" />
        </svg>
        <svg className="h-6 w-[23px]" viewBox="0 0 23 24">
            <path d="M14 6h8v18h-6z" fill="#bcbcbc" />
            <path d="M1 6l4 2 6-6v20l-6-6-4 2z" fill="#5cb8ea" stroke="#1f6a9c" strokeWidth="1.500" />
            <path d="M14 8v9" stroke="#1f6a9c" strokeWidth="3" />
        </svg>
        <svg className="h-6 w-[23px]" viewBox="0 0 23 24">
            <rect x="7" y="1" width="15" height="12" fill="#4aa9d8" stroke="#777" strokeWidth="2" />
            <rect x="2" y="9" width="13" height="9" fill="#4aa9d8" stroke="#eee" strokeWidth="2" />
            <path d="M1 8h15v11H1zM3 22h10" fill="none" stroke="#777" strokeWidth="1.500" />
        </svg>
        <svg className="h-6 w-[23px]" viewBox="0 0 23 24">
            <path d="M1 23C2 12 8 4 20 4l-2 12-9 6z" fill="#5cb8ea" stroke="#1f6a9c" strokeWidth="1.500" />
        </svg>
        <svg className="h-6 w-[23px]" viewBox="0 0 23 24"><rect x="2" y="4" width="19" height="17" fill="#6ab8e8" /></svg>
        <svg className="h-6 w-[23px]" viewBox="0 0 23 24"><path d="M1 8h20v14H1z" fill="#ececec" stroke="#999" strokeWidth="2" /></svg>
        <svg className="h-6 w-[23px]" viewBox="0 0 23 24">
            <rect x="2" y="8" width="16" height="14" fill="#3e9fe0" stroke="#27639c" strokeWidth="2" />
            <rect x="8" y="2" width="14" height="11" fill="#7c80dd" stroke="#4d50ab" strokeWidth="1.500" />
        </svg>
        <svg className="h-6 w-[23px]" viewBox="0 0 23 24">
            <rect x="1" y="1" width="14" height="22" rx="2" fill="#6a70c8" stroke="#3c4192" strokeWidth="2" strokeDasharray="3 1" />
            <path d="m4 7 4 8 4-8" fill="none" stroke="#fff" strokeWidth="2.500" />
            <path d="M20 1v22" stroke="#222" strokeWidth="6" />
            <path d="M20 2v9" stroke="#e0584a" strokeWidth="3" />
            <path d="M20 11v11" stroke="#6cc04a" strokeWidth="3" />
        </svg>
        <svg className="h-6 w-[23px]" viewBox="0 0 23 24">
            <ellipse cx="10" cy="12" rx="9" ry="11" fill="#6cc4e6" stroke="#2f7fa6" strokeWidth="1.500" />
            <path d="m10 4 5 1 7 9-6 9-6-1 4-7-6-6z" fill="#8fd02f" stroke="#4c8a14" />
        </svg>
        <svg className="h-6 w-[23px]" viewBox="0 0 23 24">
            <rect x="1" y="1" width="21" height="22" rx="3" fill="#6fcdf2" stroke="#2b7da8" strokeWidth="2" />
            <path d="M8 5h7v6h4l-7 8-8-8h4z" fill="#9be13c" stroke="#3f8a1a" strokeWidth="1.500" />
        </svg>
        <span className="w-[86px] overflow-hidden whitespace-nowrap">Right Ctrl</span>
    </div>
);

const App = () => (
    <div className="relative flex min-h-screen flex-col bg-black px-[86px] pb-[210px] pt-[208px] font-['Open_Sans','Noto_Sans',sans-serif] text-[22px] text-[#4c4c4c]">
        <div className="relative flex flex-1 flex-col overflow-hidden bg-[#f1f0ef]">
            <MenuBar />
            <div className="flex flex-1">
                <Launcher />
                <div className="flex min-w-0 flex-1 flex-col">
                    <Toolbar />
                    <main className="flex flex-1 pb-[9px]">
                        <DisplaysPanel />
                        <CollapseHandle side="left" />
                        <Viewport />
                        <CollapseHandle side="right" />
                        <ViewsPanel />
                    </main>
                    <TimePanel />
                    <StatusBar />
                </div>
            </div>
            <MachineBar />
            <div className="absolute bottom-[2px] right-[203px] flex h-[76px] w-[76px] items-center justify-center rounded-full border-4 border-[#e9f5ff] bg-linear-to-br from-[#3b8ff0] via-[#4296f7] to-[#7cc0fb] font-['Liberation_Sans',sans-serif] text-[20px] text-[#d9edff]">
                00:31
            </div>
        </div>
        <svg className="absolute bottom-12 right-[46px] h-20 w-20 bg-[#b8b8b8]" viewBox="0 0 80 80" fill="#950025">
            <path d="M30 17a10 10 0 0 1 20 0v28C50 58 42 67 32 73q-2 1-2-1z" />
            <path d="M24 15q2-1 2 1v38q0 2-2 1L9 47q-1-1-1-2V26q0-1 1-2z" />
            <path d="M57 15q-2-1-2 1v29q0 2 2 1l14-7q2-1 2-2V26q0-1-2-2z" />
        </svg>
    </div>
);

export default App;
